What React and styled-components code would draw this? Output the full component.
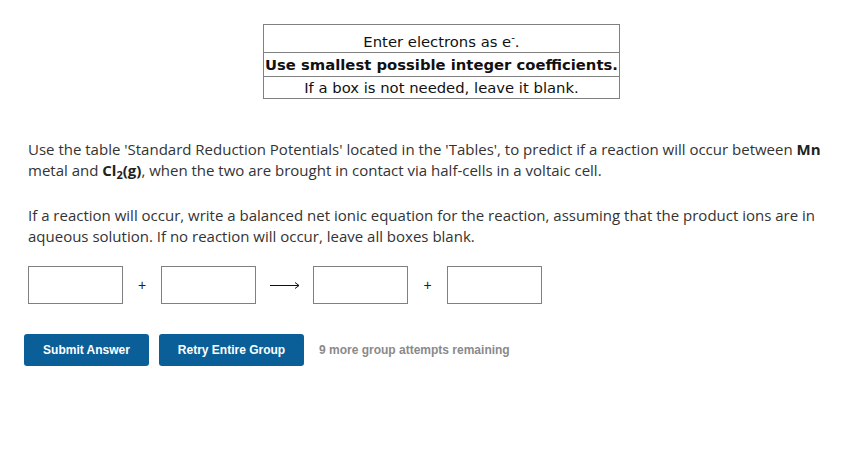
import React from "react";
import styled, { createGlobalStyle } from "styled-components";

const GlobalStyle = createGlobalStyle`
  html, body {
    margin: 0;
    padding: 0;
    background: #ffffff;
  }
`;

const Page = styled.div`
  width: 860px;
  height: 456px;
  box-sizing: border-box;
  padding: 24px 0 0 28px;
  font-family: "Open Sans", "Liberation Sans", sans-serif;
  color: #333333;
  overflow: hidden;
`;

const InfoTable = styled.table`
  border-collapse: collapse;
  margin: 0 0 0 235px;
  font-family: "DejaVu Sans", Verdana, sans-serif;
  font-size: 14.8px;
  color: #111111;
`;

const InfoCell = styled.td`
  border: 1px solid #808080;
  text-align: center;
  padding: ${(p) => p.$pt || 0}px 1px 0 1px;
  height: ${(p) => p.$h}px;
  box-sizing: border-box;
  font-weight: ${(p) => (p.$bold ? 700 : 400)};
  white-space: nowrap;
  line-height: 18px;
  sup {
    font-size: 10px;
    vertical-align: 6px;
    line-height: 0;
  }
`;

const Paragraph = styled.p`
  margin: ${(p) => p.$top}px 0 0 0;
  width: 810px;
  font-size: 15px;
  line-height: 20.5px;
  b {
    font-weight: 700;
    color: #222;
  }
  sub {
    font-size: 11px;
    vertical-align: -3px;
    line-height: 0;
  }
`;

const EquationRow = styled.div`
  display: flex;
  align-items: center;
  margin-top: 20px;
  height: 38px;
`;

const AnswerBox = styled.input`
  box-sizing: border-box;
  width: 95px;
  height: 38px;
  border: 1px solid #808080;
  margin: 0;
  padding: 0 4px;
  background: #ffffff;
  outline: none;
`;

const Plus = styled.span`
  width: ${(p) => p.$w}px;
  text-align: center;
  font-family: "Liberation Sans", Arial, sans-serif;
  font-size: 14px;
  color: #222;
  line-height: 1;
`;

const ArrowWrap = styled.span`
  display: flex;
  align-items: center;
  justify-content: center;
  width: 57px;
`;

const ButtonRow = styled.div`
  display: flex;
  align-items: center;
  margin: 30px 0 0 -4px;
`;

const ActionButton = styled.button`
  box-sizing: border-box;
  height: 32px;
  width: ${(p) => p.$w}px;
  margin-right: 10px;
  padding: 0;
  border: none;
  border-radius: 3px;
  background: #0a5f98;
  color: #ffffff;
  font-family: "Liberation Sans", Arial, sans-serif;
  font-weight: 700;
  font-size: 12px;
  cursor: pointer;
`;

const Remaining = styled.span`
  margin-left: 5px;
  font-family: "Liberation Sans", Arial, sans-serif;
  font-weight: 700;
  font-size: 12px;
  color: #8a8a8a;
`;

function Arrow() {
  return (
    <svg width="30" height="9" viewBox="0 0 30 9">
      <line x1="0" y1="4.5" x2="29" y2="4.5" stroke="#111" strokeWidth="1" />
      <polyline points="25,1.5 29,4.5 25,7.5" fill="none" stroke="#111" strokeWidth="1" />
    </svg>
  );
}

export default function App() {
  return (
    <>
      <GlobalStyle />
      <Page>
        <InfoTable>
          <tbody>
            <tr>
              <InfoCell $h={28} $pt={6}>
                Enter electrons as e<sup>-</sup>.
              </InfoCell>
            </tr>
            <tr>
              <InfoCell $h={24} $bold>
                Use smallest possible integer coefficients.
              </InfoCell>
            </tr>
            <tr>
              <InfoCell $h={22}>If a box is not needed, leave it blank.</InfoCell>
            </tr>
          </tbody>
        </InfoTable>

        <Paragraph $top={40}>
          Use the table 'Standard Reduction Potentials' located in the 'Tables', to predict if a
          reaction will occur between <b>Mn</b> metal and{" "}
          <b>
            Cl<sub>2</sub>(g)
          </b>
          , when the two are brought in contact via half-cells in a voltaic cell.
        </Paragraph>

        <Paragraph $top={25}>
          If a reaction will occur, write a balanced net ionic equation for the reaction, assuming
          that the product ions are in aqueous solution. If no reaction will occur, leave all boxes
          blank.
        </Paragraph>

        <EquationRow>
          <AnswerBox />
          <Plus $w={38}>+</Plus>
          <AnswerBox />
          <ArrowWrap>
            <Arrow />
          </ArrowWrap>
          <AnswerBox />
          <Plus $w={39}>+</Plus>
          <AnswerBox />
        </EquationRow>

        <ButtonRow>
          <ActionButton $w={125}>Submit Answer</ActionButton>
          <ActionButton $w={145}>Retry Entire Group</ActionButton>
          <Remaining>9 more group attempts remaining</Remaining>
        </ButtonRow>
      </Page>
    </>
  );
}
